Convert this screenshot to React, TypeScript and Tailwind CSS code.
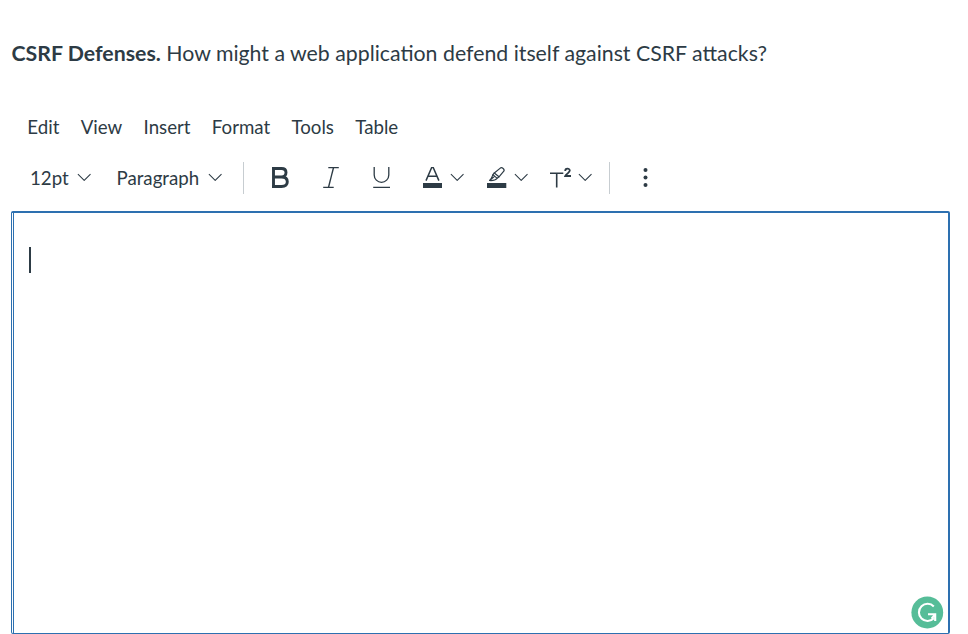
import React from "react";

const menus = ["Edit", "View", "Insert", "Format", "Tools", "Table"];

function Chevron() {
  return (
    <svg width="14" height="8" viewBox="0 0 14 8" fill="none" stroke="currentColor" strokeWidth="1.050" className="shrink-0 -translate-x-px -translate-y-px">
      <path d="M.9 1.200 7.200 7.400 13.500 1.200" />
    </svg>
  );
}

function BoldIcon() {
  return (
    <svg width="17" height="22" viewBox="0 0 17 22" fill="none" stroke="currentColor" strokeWidth="2.900">
      <path d="M1.500 1.500V19.500M0 1.500H9.500C12.500 1.500 14 3.200 14 5.500S12.500 10 9.500 10H1.500M9.500 10C13.500 10 15.300 12 15.300 14.800S13.500 19.500 9.500 19.500H0" />
    </svg>
  );
}

function ItalicIcon() {
  return (
    <svg width="17" height="22" viewBox="0 0 17 22" fill="none" stroke="currentColor" strokeWidth="1.250">
      <path d="M5.300 .7H15.800M.2 20.300H10.700" />
      <path d="M10.500 .7 5.500 20.300" strokeWidth="1.400" />
    </svg>
  );
}

function UnderlineIcon() {
  return (
    <svg width="18" height="22" viewBox="0 0 18 22" fill="none" stroke="currentColor" strokeWidth="1.300">
      <path d="M1.200 0V8A7.300 7.300 0 0 0 15.800 8V0M.2 20.400H17" />
    </svg>
  );
}

function TextColorIcon() {
  return (
    <svg width="20" height="22" viewBox="0 0 20 22" fill="none" stroke="currentColor" strokeWidth="1.500">
      <path d="M3 13.600 8.700.5H10.200L15.900 13.600M5 9.200H13.900" />
      <path d="M0 16H19V21H0Z" fill="currentColor" stroke="none" />
    </svg>
  );
}

function HighlightIcon() {
  return (
    <svg width="20" height="22" viewBox="0 0 20 22" fill="none" stroke="currentColor" strokeWidth="1.200" strokeLinejoin="round">
      <path d="M7.300 6 13.300 1.100C15 -.1 18 2.300 16.800 4.200L12 9.800Z" />
      <path d="M7.300 6 5.900 7.600 10.200 11.400 12 9.800M5.900 7.600C5 10 5 11.200 2.600 13.500C5.800 13.700 8.500 13.300 10.200 11.400M2.800 13.300 7.300 9.600" />
      <path d="M0 16H19.300V21H0Z" fill="currentColor" stroke="none" />
    </svg>
  );
}

function SuperscriptIcon() {
  return (
    <svg width="22" height="22" viewBox="0 0 22 22" fill="none" stroke="currentColor">
      <path d="M0 6.200H13.300M6.700 6.200V20.500" strokeWidth="1.600" />
      <path d="M15.200 4C15.100 .9 19.800 1 19.800 3.600C19.800 5.500 16.400 6.700 15.300 9H21" strokeWidth="1.800" />
    </svg>
  );
}

export default function App() {
  return (
    <main className="flex h-[634px] w-[968px] flex-col overflow-hidden bg-white text-[#2d3b45] font-[Lato,sans-serif]">
      <h1 className="mt-[35px] ml-[11.500px] h-9 text-[21.310px] leading-9 font-normal whitespace-nowrap">
        <strong className="font-bold">CSRF Defenses.</strong> How might a web application defend itself against CSRF attacks?
      </h1>
      <nav className="mt-10 ml-[27.300px] flex h-8 items-center gap-[21.300px] text-[18.700px] leading-8">
        {menus.map((m) => (
          <button key={m}>{m}</button>
        ))}
      </nav>
      <div className="mt-[19px] ml-[30px] flex h-8 items-center text-[18.700px]">
        <button className="flex w-[86px] items-center justify-between pr-6">
          12pt <Chevron />
        </button>
        <button className="flex w-[127px] items-center justify-between pr-5 pl-[.5px]">
          Paragraph <Chevron />
        </button>
        <span className="h-8 w-px bg-[#c7cdd1]" />
        <button className="ml-7"><BoldIcon /></button>
        <button className="ml-[34px]"><ItalicIcon /></button>
        <button className="ml-[33px]"><UnderlineIcon /></button>
        <button className="ml-8 flex items-center gap-2"><TextColorIcon /><Chevron /></button>
        <button className="ml-[22px] flex items-center gap-2"><HighlightIcon /><Chevron /></button>
        <button className="ml-[21px] flex items-center gap-[7px]"><SuperscriptIcon /><Chevron /></button>
        <span className="ml-4 h-8 w-px bg-[#c7cdd1]" />
        <button className="ml-[33px]">
          <svg width="5" height="20" viewBox="0 0 5 20" fill="currentColor">
            <circle cx="2.500" cy="2" r="2" />
            <circle cx="2.500" cy="9.500" r="2" />
            <circle cx="2.500" cy="17" r="2" />
          </svg>
        </button>
      </div>
      <section className="mt-[17px] ml-[11px] flex h-[423px] w-[939px] rounded-[2px] border border-t-2 border-r-2 border-[#2d70b0]">
        <div className="ml-px flex flex-1 flex-col justify-between border-l border-[#2d70b0]">
          <div className="mt-[34px] ml-[15px] h-[26px] w-[2px] bg-[#2d3b45]" />
          <svg width="33" height="33" viewBox="0 0 33 33" className="mr-1 mb-1 self-end">
            <circle cx="16.300" cy="16.500" r="15.900" fill="#56bd98" />
            <path d="M22.800 10.500A8.600 8.600 0 1 0 22.800 22.300M17 18.300H24.200V25.100M23.800 18.800 20.700 22.500" fill="none" stroke="white" strokeWidth="2.100" />
          </svg>
        </div>
      </section>
    </main>
  );
}
